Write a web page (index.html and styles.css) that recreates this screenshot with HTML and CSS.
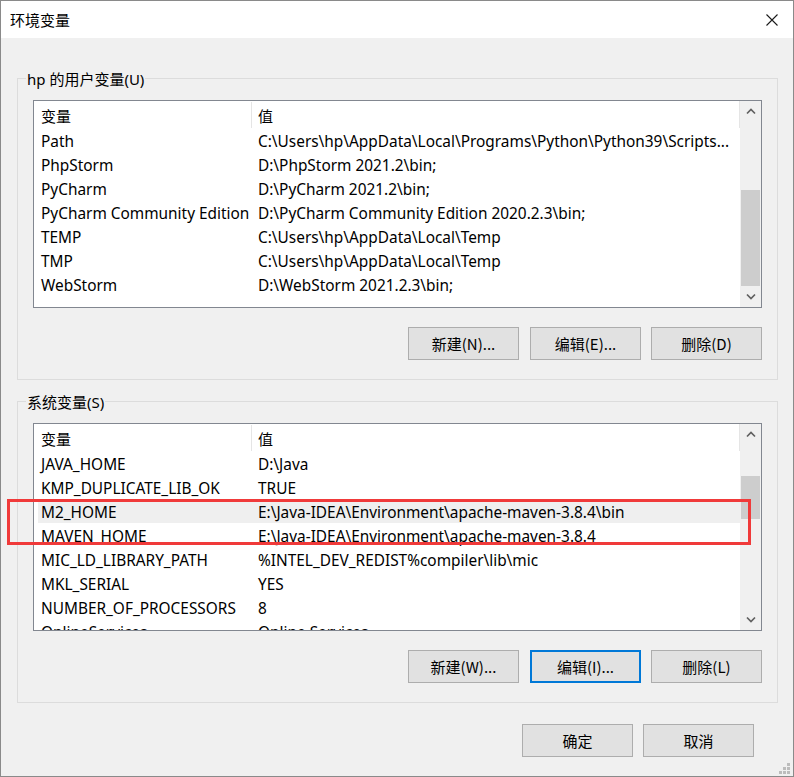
FILE: index.html
```html
<!DOCTYPE html>
<html lang="zh-CN">
<head>
<meta charset="utf-8">
<title>环境变量</title>
<link rel="stylesheet" href="styles.css">
</head>
<body>
<div class="window">
  <div class="titlebar">
    <span class="title">环境变量</span>
    <svg class="close" width="12" height="12" viewBox="0 0 12 12"><path d="M0.5 0.5 L11.5 11.5 M11.5 0.5 L0.5 11.5" stroke="#1a1a1a" stroke-width="1.1" fill="none"/></svg>
  </div>
  <div class="content">
    <section class="group">
      <div class="legend">hp 的用户变量(U)</div>
      <div class="list">
        <div class="list-main">
          <div class="list-header"><div class="hcell hname">变量</div><div class="hcell hvalue">值</div></div>
          <div class="row"><div class="cname">Path</div><div class="cvalue">C:\Users\hp\AppData\Local\Programs\Python\Python39\Scripts...</div></div>
          <div class="row"><div class="cname">PhpStorm</div><div class="cvalue">D:\PhpStorm 2021.2\bin;</div></div>
          <div class="row"><div class="cname">PyCharm</div><div class="cvalue">D:\PyCharm 2021.2\bin;</div></div>
          <div class="row"><div class="cname">PyCharm Community Edition</div><div class="cvalue">D:\PyCharm Community Edition 2020.2.3\bin;</div></div>
          <div class="row"><div class="cname">TEMP</div><div class="cvalue">C:\Users\hp\AppData\Local\Temp</div></div>
          <div class="row"><div class="cname">TMP</div><div class="cvalue">C:\Users\hp\AppData\Local\Temp</div></div>
          <div class="row"><div class="cname">WebStorm</div><div class="cvalue">D:\WebStorm 2021.2.3\bin;</div></div>
        </div>
        <div class="scrollbar">
          <div class="arrow"><svg width="10" height="7" viewBox="0 0 10 7"><polyline points="1,5.5 5,1.5 9,5.5" fill="none" stroke="#606060" stroke-width="1.7"/></svg></div>
          <div class="track"><div class="thumb" style="margin-top:68px;height:96px"></div></div>
          <div class="arrow"><svg width="10" height="7" viewBox="0 0 10 7"><polyline points="1,1.5 5,5.5 9,1.5" fill="none" stroke="#606060" stroke-width="1.7"/></svg></div>
        </div>
      </div>
      <div class="actions">
        <button class="btn">新建(N)...</button>
        <button class="btn">编辑(E)...</button>
        <button class="btn">删除(D)</button>
      </div>
    </section>

    <section class="group group-system">
      <div class="legend">系统变量(S)</div>
      <div class="list">
        <div class="list-main">
          <div class="list-header"><div class="hcell hname">变量</div><div class="hcell hvalue">值</div></div>
          <div class="row"><div class="cname">JAVA_HOME</div><div class="cvalue">D:\Java</div></div>
          <div class="row"><div class="cname">KMP_DUPLICATE_LIB_OK</div><div class="cvalue">TRUE</div></div>
          <div class="row row-hot"><div class="cname">M2_HOME</div><div class="cvalue">E:\Java-IDEA\Environment\apache-maven-3.8.4\bin</div></div>
          <div class="row"><div class="cname">MAVEN_HOME</div><div class="cvalue">E:\Java-IDEA\Environment\apache-maven-3.8.4</div></div>
          <div class="row"><div class="cname">MIC_LD_LIBRARY_PATH</div><div class="cvalue">%INTEL_DEV_REDIST%compiler\lib\mic</div></div>
          <div class="row"><div class="cname">MKL_SERIAL</div><div class="cvalue">YES</div></div>
          <div class="row"><div class="cname">NUMBER_OF_PROCESSORS</div><div class="cvalue">8</div></div>
          <div class="row"><div class="cname">OnlineServices</div><div class="cvalue">Online Services</div></div>
        </div>
        <div class="scrollbar">
          <div class="arrow"><svg width="10" height="7" viewBox="0 0 10 7"><polyline points="1,5.5 5,1.5 9,5.5" fill="none" stroke="#606060" stroke-width="1.7"/></svg></div>
          <div class="track"><div class="thumb" style="margin-top:31px;height:43px"></div></div>
          <div class="arrow"><svg width="10" height="7" viewBox="0 0 10 7"><polyline points="1,1.5 5,5.5 9,1.5" fill="none" stroke="#606060" stroke-width="1.7"/></svg></div>
        </div>
      </div>
      <div class="actions">
        <button class="btn">新建(W)...</button>
        <button class="btn btn-focus">编辑(I)...</button>
        <button class="btn">删除(L)</button>
      </div>
    </section>

    <div class="dialog-actions">
      <button class="btn">确定</button>
      <button class="btn">取消</button>
    </div>
  </div>
  <div class="annotation"></div>
  <div class="grip">
    <span></span><span></span><span></span>
    <span></span><span></span><span></span>
    <span></span><span></span><span></span>
  </div>
</div>
</body>
</html>
```
FILE: styles.css
```css
* { box-sizing: border-box; }
html, body { margin: 0; padding: 0; }
body {
  font-family: "Noto Sans", "Noto Sans CJK SC", sans-serif;
  font-size: 15px;
  color: #000;
  background: #f0f0f0;
}
.window {
  position: relative;
  width: 794px;
  height: 777px;
  border: 1px solid #8a8a8a;
  background: #f0f0f0;
  display: flex;
  flex-direction: column;
  overflow: hidden;
}
.titlebar {
  height: 37px;
  background: #fff;
  display: flex;
  align-items: center;
  padding: 0 15px 0 9px;
}
.title {
  flex: 1;
  line-height: 20px;
  font-family: "Noto Sans CJK SC", sans-serif;
}
.close { display: block; }
.content {
  flex: 1;
  padding: 40px 15px 0 16px;
  display: flex;
  flex-direction: column;
}
.group {
  height: 302px;
  border: 1px solid #dcdcdc;
  display: flex;
  flex-direction: column;
}
.group-system { margin-top: 21px; }
.legend {
  align-self: flex-start;
  margin: -10px 0 0 8px;
  padding: 0 1px;
  line-height: 20px;
  background: #f0f0f0;
}
.list {
  margin: 11px 15px 0 15px;
  height: 208px;
  border: 1px solid #828790;
  background: #fff;
  display: flex;
}
.list-main {
  flex: 1;
  overflow: hidden;
  min-width: 0;
}
.list-header {
  height: 27px;
  display: flex;
  border-right: 1px solid #e5e5e5;
}
.hcell {
  line-height: 26px;
  white-space: nowrap;
  padding-top: 1px;
}
.hname {
  width: 218px;
  padding-left: 7px;
  border-right: 1px solid #e5e5e5;
  margin-top: 1px;
}
.hvalue {
  padding-left: 6px;
  margin-top: 1px;
}
.row {
  height: 24px;
  margin-left: 4px;
  padding-top: 2px;
  display: flex;
  align-items: center;
  white-space: nowrap;
  font-size: 15.4px;
}
.row-hot { background: #efefef; }
.cname {
  width: 213px;
  padding-left: 3px;
  flex: none;
}
.cvalue {
  padding-left: 7px;
  overflow: hidden;
}
.scrollbar {
  width: 21px;
  flex: none;
  background: #f0f0f0;
  display: flex;
  flex-direction: column;
}
.arrow {
  height: 21px;
  display: flex;
  align-items: center;
  justify-content: center;
}
.arrow svg { display: block; }
.track { flex: 1; padding: 0 1px; }
.thumb { background: #cdcdcd; }
.actions {
  display: flex;
  justify-content: flex-end;
  gap: 10px;
  margin: 19px 15px 0 0;
}
.actions .btn:first-child { margin-right: 1px; }
.btn {
  width: 111px;
  height: 33px;
  border: 1px solid #adadad;
  background: #e1e1e1;
  font-family: "Noto Sans CJK SC", "Noto Sans", sans-serif;
  font-size: 15px;
  color: #000;
  padding: 0;
  line-height: 20px;
}
.btn-focus {
  border: 2px solid #0078d7;
}
.dialog-actions {
  display: flex;
  justify-content: flex-end;
  gap: 10px;
  margin: 21px 24px 0 0;
}
.annotation {
  position: absolute;
  left: 6px;
  top: 498px;
  width: 744px;
  height: 46px;
  border: 3px solid #f03a3a;
  pointer-events: none;
}
.grip {
  position: absolute;
  right: 3px;
  bottom: 2px;
  width: 11px;
  height: 11px;
  display: grid;
  grid-template-columns: repeat(3, 3px);
  grid-template-rows: repeat(3, 3px);
  gap: 1px;
}
.grip span { background: #bcbcbc; }
.grip span:nth-child(1), .grip span:nth-child(2), .grip span:nth-child(4) { background: transparent; }
```
